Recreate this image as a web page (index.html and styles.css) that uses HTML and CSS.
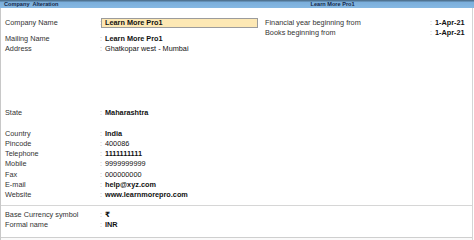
FILE: index.html
```html
<!DOCTYPE html>
<html>
<head>
<meta charset="utf-8">
<link rel="stylesheet" href="styles.css">
</head>
<body>
<div class="titlebar">
  <span class="title">Company&nbsp; Alteration</span>
  <span class="company">Learn More Pro1</span>
</div>
<div class="window">
  <div class="main">
    <div class="left">
      <div class="row first"><span class="lbl">Company Name</span><span class="colon">:</span><span class="input">Learn More Pro1</span></div>
      <div class="group mailing">
        <div class="row"><span class="lbl">Mailing Name</span><span class="colon">:</span><span class="val b">Learn More Pro1</span></div>
        <div class="row"><span class="lbl">Address</span><span class="colon">:</span><span class="val">Ghatkopar west - Mumbai</span></div>
      </div>
      <div class="group state">
        <div class="row"><span class="lbl">State</span><span class="colon">:</span><span class="val b">Maharashtra</span></div>
      </div>
      <div class="group contact">
        <div class="row"><span class="lbl">Country</span><span class="colon">:</span><span class="val b">India</span></div>
        <div class="row"><span class="lbl">Pincode</span><span class="colon">:</span><span class="val">400086</span></div>
        <div class="row"><span class="lbl">Telephone</span><span class="colon">:</span><span class="val b">1111111111</span></div>
        <div class="row"><span class="lbl">Mobile</span><span class="colon">:</span><span class="val">9999999999</span></div>
        <div class="row"><span class="lbl">Fax</span><span class="colon">:</span><span class="val">000000000</span></div>
        <div class="row"><span class="lbl">E-mail</span><span class="colon">:</span><span class="val b">help@xyz.com</span></div>
        <div class="row"><span class="lbl">Website</span><span class="colon">:</span><span class="val b">www.learnmorepro.com</span></div>
      </div>
    </div>
    <div class="right">
      <div class="row"><span class="rlbl">Financial year beginning from</span><span class="colon">:</span><span class="val b">1-Apr-21</span></div>
      <div class="row"><span class="rlbl">Books beginning from</span><span class="colon">:</span><span class="val b">1-Apr-21</span></div>
    </div>
  </div>
  <div class="currency">
    <div class="row"><span class="lbl">Base Currency symbol</span><span class="colon">:</span><span class="val b">₹</span></div>
    <div class="row"><span class="lbl">Formal name</span><span class="colon">:</span><span class="val b">INR</span></div>
  </div>
  <div class="footer"></div>
</div>
</body>
</html>
```

FILE: styles.css
```css
html, body {
  margin: 0;
  padding: 0;
  background: #ffffff;
}
body {
  font-family: "Liberation Sans", Arial, "DejaVu Sans", sans-serif;
  font-size: 7.3px;
  color: #333333;
  width: 474px;
  height: 240px;
  overflow: hidden;
}
.titlebar {
  height: 8px;
  background: linear-gradient(#4f7391 0, #4f7391 1px, #7aaedb 2px, #86b8e2 8px);
  display: flex;
  align-items: center;
  font-size: 5.6px;
  font-weight: bold;
  color: #14284a;
  line-height: 8px;
  white-space: pre;
}
.title {
  padding-left: 4px;
}
.company {
  margin-left: 252px;
}
.window {
  width: 473px;
  height: 232px;
  border-left: 1px solid #c8c8c8;
  border-right: 1px solid #d4d4d4;
  box-sizing: border-box;
  display: flex;
  flex-direction: column;
}
.main {
  display: flex;
  padding-top: 10px;
}
.left {
  width: 264px;
  padding-left: 4px;
  box-sizing: border-box;
}
.right {
  flex: 1;
}
.row {
  display: flex;
  align-items: center;
  height: 10.2px;
  line-height: 10.2px;
  white-space: nowrap;
}
.lbl {
  width: 95px;
}
.rlbl {
  width: 165px;
}
.colon {
  width: 5px;
  color: #b0b0b0;
}
.val {
  color: #111;
}
.b {
  font-weight: bold;
}
.first .colon {
  width: 1px;
}
.input {
  width: 157px;
  height: 10px;
  box-sizing: border-box;
  background: #fde8b4;
  border: 1px solid #9c9c9c;
  padding-left: 3px;
  font-weight: bold;
  color: #111;
  line-height: 8px;
}
.mailing {
  margin-top: 6px;
}
.state {
  margin-top: 53.6px;
}
.contact {
  margin-top: 10.5px;
}
.currency {
  margin-top: 5px;
  border-top: 1px solid #d6d6d6;
  padding-left: 4px;
  padding-top: 4px;
}
.footer {
  margin-top: auto;
  height: 2px;
  border-top: 1px solid #cfcfcf;
  background: #fafafa;
}
```
